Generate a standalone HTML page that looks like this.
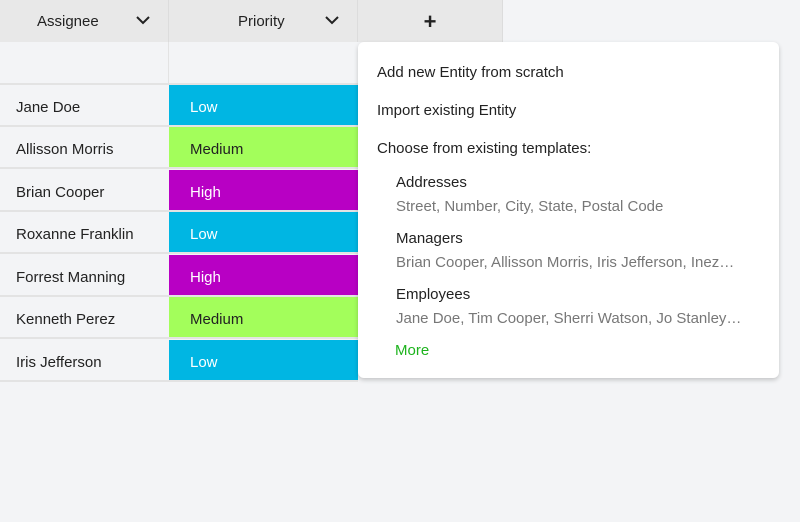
<!DOCTYPE html>
<html><head><style>
body{margin:0;width:800px;height:522px;background:#f3f4f6;font-family:"Liberation Sans",sans-serif;font-size:15px;color:#222;position:relative;overflow:hidden}
.a{position:absolute;box-sizing:border-box}
.h{background:#e8e8e8;height:42px;top:0;border-right:1px solid #dcdcdc;display:flex;align-items:center;padding-top:1px}
.r{height:42px;border-bottom:2px solid #e3e3e3;display:flex;align-items:center;padding-left:16px;padding-top:4px}
.c{left:169px;width:189px;color:#fff;padding-left:21px}
.pop{left:358px;top:42px;width:421px;height:336px;background:#fff;border-radius:6px;box-shadow:0 2px 5px rgba(0,0,0,.2)}
.pop div{position:absolute;white-space:nowrap}
.g{color:#777}
</style></head><body>
<div class="a h" style="left:0;width:169px;padding-left:37px">Assignee<svg style="position:absolute;left:136px;top:15px" width="14" height="10"><path d="M1 2l6 6 6-6" stroke="#222" stroke-width="2" fill="none"/></svg></div>
<div class="a h" style="left:169px;width:189px;padding-left:69px">Priority<svg style="position:absolute;left:156px;top:15px" width="14" height="10"><path d="M1 2l6 6 6-6" stroke="#222" stroke-width="2" fill="none"/></svg></div>
<div class="a h" style="left:358px;width:145px;justify-content:center;font-size:22px;font-weight:bold">+</div>
<div class="a" style="left:168px;top:42px;width:1px;height:43px;background:#e3e3e3"></div>
<div class="a" style="left:0;top:83px;width:358px;height:2px;background:#e3e3e3"></div>
<div class="a r" style="left:0;width:169px;top:85px">Jane Doe</div>
<div class="a r c" style="top:85px;background:#00b6e3">Low</div>
<div class="a r" style="left:0;width:169px;top:127px">Allisson Morris</div>
<div class="a r c" style="top:127px;background:#a3fe5b;color:#222">Medium</div>
<div class="a r" style="left:0;width:169px;top:170px">Brian Cooper</div>
<div class="a r c" style="top:170px;background:#b800c4">High</div>
<div class="a r" style="left:0;width:169px;top:212px">Roxanne Franklin</div>
<div class="a r c" style="top:212px;background:#00b6e3">Low</div>
<div class="a r" style="left:0;width:169px;top:255px">Forrest Manning</div>
<div class="a r c" style="top:255px;background:#b800c4">High</div>
<div class="a r" style="left:0;width:169px;top:297px">Kenneth Perez</div>
<div class="a r c" style="top:297px;background:#a3fe5b;color:#222">Medium</div>
<div class="a r" style="left:0;width:169px;top:340px">Iris Jefferson</div>
<div class="a r c" style="top:340px;background:#00b6e3">Low</div>
<div class="a pop">
<div style="left:19px;top:22px">Add new Entity from scratch</div>
<div style="left:19px;top:60px">Import existing Entity</div>
<div style="left:19px;top:98px">Choose from existing templates:</div>
<div style="left:38px;top:132px">Addresses</div>
<div class="g" style="left:38px;top:156px">Street, Number, City, State, Postal Code</div>
<div style="left:38px;top:188px">Managers</div>
<div class="g" style="left:38px;top:212px">Brian Cooper, Allisson Morris, Iris Jefferson, Inez…</div>
<div style="left:38px;top:244px">Employees</div>
<div class="g" style="left:38px;top:268px">Jane Doe, Tim Cooper, Sherri Watson, Jo Stanley…</div>
<div style="left:37px;top:300px;color:#1db31d">More</div>
</div>
</body></html>
